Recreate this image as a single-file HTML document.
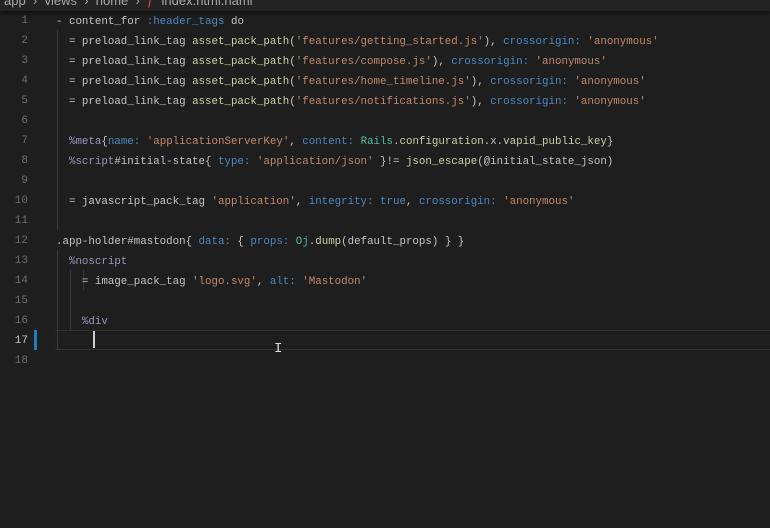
<!DOCTYPE html>
<html><head><meta charset="utf-8"><style>
html,body{margin:0;padding:0;background:#1e1e1e;width:770px;height:528px;overflow:hidden}
#hdr{position:absolute;left:0;top:0;width:770px;height:11px;background:#232323;box-shadow:0 2px 4px rgba(0,0,0,.5);overflow:hidden;z-index:2}
#hdr span{position:absolute;left:4px;top:-7px;font:13px "Liberation Sans",sans-serif;color:#a8a8a8;white-space:pre}
.ln{position:absolute;left:0;width:28px;text-align:right;font:11px "Liberation Mono",monospace;color:#6e6e6e;line-height:20px}
.ln.cur{color:#c6c6c6}
.code{position:absolute;left:56px;font:10.8px "Liberation Mono",monospace;color:#c4c4c4;line-height:20px;white-space:pre}
.s{color:#c08a68}.k{color:#4a88c0}.f{color:#cfcfa2}.t{color:#9696bc}.c{color:#4ebca6}
.g{position:absolute;width:1px;background:#3a3a3a}
</style></head><body>
<div id="hdr"><span>app  ›  views  ›  home  ›  <b style="color:#e0453a;font-weight:normal">ƒ</b>  index.html.haml</span></div>
<div class="ln" style="top:11px">1</div><div class="ln" style="top:31px">2</div><div class="ln" style="top:51px">3</div><div class="ln" style="top:71px">4</div><div class="ln" style="top:91px">5</div><div class="ln" style="top:111px">6</div><div class="ln" style="top:131px">7</div><div class="ln" style="top:151px">8</div><div class="ln" style="top:171px">9</div><div class="ln" style="top:191px">10</div><div class="ln" style="top:211px">11</div><div class="ln" style="top:231px">12</div><div class="ln" style="top:251px">13</div><div class="ln" style="top:271px">14</div><div class="ln" style="top:291px">15</div><div class="ln" style="top:311px">16</div><div class="ln cur" style="top:331px">17</div><div class="ln" style="top:351px">18</div>
<div style="position:absolute;left:55px;top:330px;width:715px;height:18px;border-top:1px solid #303030;border-bottom:1px solid #303030"></div>
<div style="position:absolute;left:34px;top:330px;width:3px;height:20px;background:#1d7fbf"></div>
<div class="g" style="left:57px;top:30px;height:200px"></div>
<div class="g" style="left:57px;top:250px;height:100px"></div>
<div class="g" style="left:70px;top:270px;height:60px"></div>
<div class="g" style="left:83px;top:270px;height:20px"></div>
<div style="position:absolute;left:93px;top:331px;width:2px;height:17px;background:#d0d0d0"></div>
<div class="code" style="top:12px">- content_for <span class="k">:header_tags</span> do
  = preload_link_tag <span class="f">asset_pack_path</span>(<span class="s">'features/getting_started.js'</span>), <span class="k">crossorigin:</span> <span class="s">'anonymous'</span>
  = preload_link_tag <span class="f">asset_pack_path</span>(<span class="s">'features/compose.js'</span>), <span class="k">crossorigin:</span> <span class="s">'anonymous'</span>
  = preload_link_tag <span class="f">asset_pack_path</span>(<span class="s">'features/home_timeline.js'</span>), <span class="k">crossorigin:</span> <span class="s">'anonymous'</span>
  = preload_link_tag <span class="f">asset_pack_path</span>(<span class="s">'features/notifications.js'</span>), <span class="k">crossorigin:</span> <span class="s">'anonymous'</span>

  <span class="t">%meta</span>{<span class="k">name:</span> <span class="s">'applicationServerKey'</span>, <span class="k">content:</span> <span class="c">Rails</span>.<span class="f">configuration</span>.x.<span class="f">vapid_public_key</span>}
  <span class="t">%script</span>#initial-state{ <span class="k">type:</span> <span class="s">'application/json'</span> }!= <span class="f">json_escape</span>(@initial_state_json)

  = javascript_pack_tag <span class="s">'application'</span>, <span class="k">integrity:</span> <span class="k">true</span>, <span class="k">crossorigin:</span> <span class="s">'anonymous'</span>

.app-holder#mastodon{ <span class="k">data:</span> { <span class="k">props:</span> <span class="c">Oj</span>.<span class="f">dump</span>(default_props) } }
  <span class="t">%noscript</span>
    = image_pack_tag <span class="s">'logo.svg'</span>, <span class="k">alt:</span> <span class="s">'Mastodon'</span>

    <span class="t">%div</span>
</div>
<div style="position:absolute;left:274px;top:341px;font:14px 'Liberation Mono',monospace;color:#ddd">I</div>
</body></html>
